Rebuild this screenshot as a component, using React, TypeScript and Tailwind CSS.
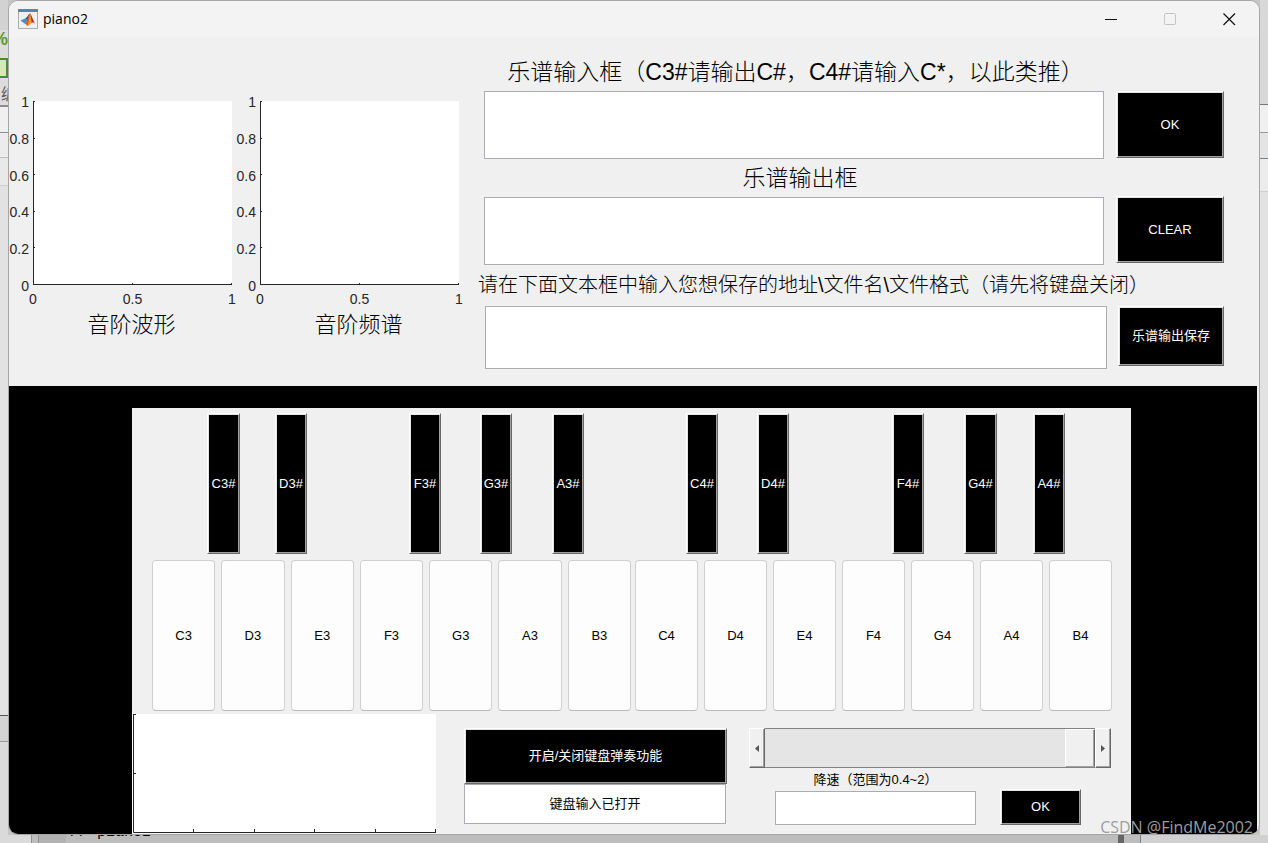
import { useState } from "react";
import type { ReactNode } from "react";

const RAISED =
  "border border-t-white border-l-white border-r-[#696969] border-b-[#696969]";
const BLACK_BUTTON = `${RAISED} bg-black text-white text-[13px] leading-4 shadow-[inset_1px_1px_0_#e3e3e3,inset_-1px_-1px_0_#a0a0a0]`;
const GREY_BUTTON = `${RAISED} bg-[#f0f0f0] shadow-[inset_-1px_-1px_0_#a0a0a0]`;
const FIELD = "block resize-none border border-[#abadb3] bg-white outline-none";

const BLACK_KEYS = [
  { note: "C3#", column: "col-start-2" },
  { note: "D3#", column: "col-start-4" },
  { note: "F3#", column: "col-start-6" },
  { note: "G3#", column: "col-start-8" },
  { note: "A3#", column: "col-start-10" },
  { note: "C4#", column: "col-start-12" },
  { note: "D4#", column: "col-start-14" },
  { note: "F4#", column: "col-start-16" },
  { note: "G4#", column: "col-start-18" },
  { note: "A4#", column: "col-start-20" },
];

const OCTAVES = [
  ["C3", "D3", "E3", "F3", "G3", "A3", "B3"],
  ["C4", "D4", "E4", "F4", "G4", "A4", "B4"],
];

function MatlabIcon() {
  return (
    <svg width="20" height="20" viewBox="0 0 20 20" aria-hidden="true">
      <rect x="0.5" y="0.5" width="19" height="19" fill="#eef0f2" stroke="#a9adb1" />
      <rect x="0" y="0" width="20" height="3" fill="#4f86b4" />
      <path d="M2.500 11.600 7.200 9.400l2.200 1.800-2.600 3.600z" fill="#3a8fd0" />
      <path d="M7.200 9.400C9.200 8.800 10 5.600 12 4.200L9.400 11.200z" fill="#27558c" />
      <path d="M12 4.200C10.500 6 9.500 12 6.800 14.800c1.200-.2 1.800 1.600 2.700 2.100 2-.6 2.600-3.200 4.200-3.200z" fill="#e2571c" />
      <path d="M12 4.200c-.6 3-1.100 8.600-2.500 12.700 2-.6 2.600-3.200 4.200-3.200-.6-3.200-.9-7-1.700-9.500z" fill="#f39a2b" />
      <path d="M12 4.200c1.600 1.200 3 7 5.200 10.600-1.200-.8-2.300-1.400-3.500-1.100-.6-3.200-.9-7-1.700-9.500z" fill="#b5361a" />
    </svg>
  );
}

function Axes({ caption }: { caption: string }) {
  const yTicks = ["1", "0.8", "0.6", "0.4", "0.2", "0"];
  const xTicks = ["0", "0.5", "1"];
  return (
    <figure className="w-[227px] shrink-0">
      <svg
        className="block overflow-visible"
        width="227"
        height="218"
        viewBox="0 0 227 218"
        fontFamily="Liberation Sans, Arial, sans-serif"
        fontSize="14"
        fill="#262626"
        role="img"
        aria-label={caption}
      >
        <rect x="24" y="9" width="199" height="184" fill="#fff" />
        <path d="M24.500 9V192.500H223" fill="none" stroke="#262626" />
        {yTicks.map((label, i) => (
          <g key={label}>
            <path d={`M24 ${9.5 + Math.round(i * 36.6)}h2`} stroke="#262626" />
            <text x="20" y={15 + Math.round(i * 36.8)} textAnchor="end">
              {label}
            </text>
          </g>
        ))}
        {xTicks.map((label, i) => (
          <g key={label}>
            <path d={`M${24.5 + i * 99} 193v-2`} stroke="#262626" />
            <text x={24 + i * 99.5} y="212" textAnchor="middle">
              {label}
            </text>
          </g>
        ))}
      </svg>
      <figcaption className="pl-[18px] text-center text-[22px] leading-[30px] font-light">
        {caption}
      </figcaption>
    </figure>
  );
}

function TitleBar() {
  return (
    <header className="flex h-[37px] items-start bg-[#f3f3f3] pl-[9px]">
      <div className="flex h-9 flex-1 items-center gap-[5px]">
        <MatlabIcon />
        <h1 className="font-['Open_Sans','Noto_Sans',sans-serif] text-[14px] leading-5">
          piano2
        </h1>
      </div>
      <button type="button" aria-label="Minimize" className="flex h-9 w-[59px] items-center justify-center">
        <svg width="13" height="13" viewBox="0 0 13 13" stroke="#111" fill="none">
          <path d="M0 6.500H12" />
        </svg>
      </button>
      <button type="button" aria-label="Maximize" disabled className="flex h-9 w-[59px] items-center justify-center">
        <svg width="13" height="13" viewBox="0 0 13 13" stroke="#c4c4c4" fill="none">
          <rect x="0.5" y="0.5" width="11" height="11" rx="1" />
        </svg>
      </button>
      <button type="button" aria-label="Close" className="flex h-9 w-[59px] items-center justify-center">
        <svg width="13" height="13" viewBox="0 0 13 13" stroke="#111" strokeWidth="1.2" fill="none">
          <path d="M0.500 0.500 12 12M12 0.500 0.500 12" />
        </svg>
      </button>
    </header>
  );
}

function ScoreForm() {
  return (
    <form className="min-w-0 flex-1 pt-[15px] pr-[35px] pb-[17px]" onSubmit={(e) => e.preventDefault()}>
      <div className="flex gap-3 pl-[6px]">
        <div className="flex-1 text-center text-[23px] font-light whitespace-nowrap">
          <label htmlFor="score-in" className="block pl-[3px] leading-[38px]">
            乐谱输入框（C3#请输出C#，C4#请输入C*，以此类推）
          </label>
          <textarea id="score-in" className={`${FIELD} h-[68px] w-full`} />
          <label htmlFor="score-out" className="block pl-3 leading-[38px]">
            乐谱输出框
          </label>
          <textarea id="score-out" readOnly className={`${FIELD} h-[68px] w-full`} />
        </div>
        <div className="flex w-[108px] flex-col gap-[38px] pt-[38px]">
          <button type="button" className={`${BLACK_BUTTON} h-[67px]`}>
            OK
          </button>
          <button type="button" className={`${BLACK_BUTTON} h-[67px]`}>
            CLEAR
          </button>
        </div>
      </div>
      <label htmlFor="save-path" className="block text-[20px] leading-[41px] font-light whitespace-nowrap">
        请在下面文本框中输入您想保存的地址\文件名\文件格式（请先将键盘关闭）
      </label>
      <div className="flex items-start gap-[11px] pl-[7px]">
        <input id="save-path" type="text" className={`${FIELD} h-[63px] min-w-0 flex-1 px-2 text-[20px]`} />
        <button type="button" className={`${BLACK_BUTTON} h-[60px] w-[106px]`}>
          乐谱输出保存
        </button>
      </div>
    </form>
  );
}

function Keys() {
  return (
    <>
      <div className="grid grid-cols-[75fr_33fr_35fr_32fr_102fr_32fr_39fr_32fr_40fr_32fr_102fr_32fr_39fr_32fr_103fr_32fr_40fr_33fr_36fr_32fr_66fr] pt-[5px]">
        {BLACK_KEYS.map(({ note, column }) => (
          <button key={note} type="button" className={`${BLACK_BUTTON} ${column} row-start-1 h-[141px]`}>
            {note}
          </button>
        ))}
      </div>
      <div className="grid grid-cols-[479fr_477fr] gap-1 pt-[6px] pr-[19px] pb-[3px] pl-5">
        {OCTAVES.map((notes) => (
          <div key={notes[0]} className="grid grid-cols-7 gap-[6px]">
            {notes.map((note) => (
              <button
                key={note}
                type="button"
                className="h-[151px] rounded-[4px] border border-[#d0d0d0] border-b-[#bababa] bg-[#fdfdfd] text-[13px]"
              >
                {note}
              </button>
            ))}
          </div>
        ))}
      </div>
    </>
  );
}

function KeyPlot() {
  return (
    <svg className="block shrink-0" width="304" height="119" viewBox="0 0 304 119" stroke="#262626" fill="none" aria-hidden="true">
      <rect width="304" height="119" fill="#fff" stroke="none" />
      <path d="M1.500 0V118.500H304M1 .5h3M1 59.500h3M61.500 118v-3M122.500 118v-3M182.500 118v-3M243.500 118v-3M303.500 118v-3" />
    </svg>
  );
}

function SpeedSlider() {
  const [speed, setSpeed] = useState(2);
  const step = (delta: number) => setSpeed((s) => Math.min(2, Math.max(0.4, s + delta)));
  return (
    <div className="flex h-10">
      <button type="button" aria-label="-" onClick={() => step(-0.1)} className={`${GREY_BUTTON} flex w-4 items-center justify-center`}>
        <svg width="4" height="7" viewBox="0 0 4 7" fill="#555">
          <path d="M4 0v7L0 3.500z" />
        </svg>
      </button>
      <input
        type="range"
        id="speed-slider"
        aria-label="降速"
        min={0.4}
        max={2}
        step={0.01}
        value={speed}
        onChange={(e) => setSpeed(Number(e.target.value))}
        className="m-0 h-10 min-w-0 flex-1 appearance-none border-y border-[#828282] bg-[#e5e5e5] outline-none [&::-webkit-slider-thumb]:h-[38px] [&::-webkit-slider-thumb]:w-[30px] [&::-webkit-slider-thumb]:appearance-none [&::-webkit-slider-thumb]:border [&::-webkit-slider-thumb]:border-t-white [&::-webkit-slider-thumb]:border-r-[#696969] [&::-webkit-slider-thumb]:border-b-[#a0a0a0] [&::-webkit-slider-thumb]:border-l-white [&::-webkit-slider-thumb]:bg-[#f0f0f0] [&::-webkit-slider-thumb]:shadow-[inset_-1px_0_0_#a0a0a0]"
      />
      <button type="button" aria-label="+" onClick={() => step(0.1)} className={`${GREY_BUTTON} flex w-4 items-center justify-center`}>
        <svg width="4" height="7" viewBox="0 0 4 7" fill="#555">
          <path d="M0 0v7l4-3.500z" />
        </svg>
      </button>
    </div>
  );
}

function Controls() {
  return (
    <div className="flex pr-5">
      <KeyPlot />
      <div className="ml-7 flex w-[263px] flex-col pt-[14px] text-[13px]">
        <button type="button" className={`${BLACK_BUTTON} h-[56px]`}>
          开启/关闭键盘弹奏功能
        </button>
        <output className="mr-px h-10 border border-[#abadb3] bg-white text-center leading-[38px]">
          键盘输入已打开
        </output>
      </div>
      <div className="ml-[22px] min-w-0 flex-1 pt-[14px] text-[13px]">
        <SpeedSlider />
        <div className="flex items-end gap-6 pl-[26px]">
          <div className="w-[201px]">
            <label htmlFor="speed" className="block text-center leading-[23px] whitespace-nowrap">
              降速（范围为0.4~2）
            </label>
            <input id="speed" type="text" className={`${FIELD} h-[34px] w-full px-2`} />
          </div>
          <button type="button" className={`${BLACK_BUTTON} h-[36px] w-[81px]`}>
            OK
          </button>
        </div>
      </div>
    </div>
  );
}

function Sliver({ children }: { children?: ReactNode }) {
  return (
    <div aria-hidden="true" className="flex w-2 shrink-0 flex-col overflow-hidden bg-[#dcdcdc]">
      {children}
    </div>
  );
}

export default function App() {
  return (
    <div className="relative flex min-h-screen flex-col bg-[#c6c6c6] font-['Liberation_Sans','Noto_Sans_CJK_SC',sans-serif] text-black">
      <div className="flex flex-1">
        <Sliver>
          <div className="h-[30px] shrink-0 bg-[#d2d2d2]" />
          <div className="flex h-[28px] shrink-0 justify-end text-[18px] leading-[18px] font-bold text-[#5b9a2f]">%</div>
          <div className="h-5 shrink-0 border-2 border-l-0 border-[#4b8b3b] bg-[#d5e8b8]" />
          <div className="h-[27px] shrink-0 pl-px text-[16px] leading-[34px] text-[#555]">编</div>
          <div className="h-[28px] shrink-0 border-t-2 border-b border-[#8c8c8c] bg-[#f0f0f0]" />
          <div className="h-[25px] shrink-0 border-b border-[#bdbdbd] bg-[#ececec]" />
          <div className="h-7 shrink-0 border-b border-[#cfcfcf] bg-[#e9e9e9]" />
          <div className="flex-1 bg-[#e2e2e2]" />
          <div className="h-[27px] shrink-0 border-t border-b border-t-[#555] border-b-[#999] bg-[#d4d4d4]" />
          <div className="h-[93px] shrink-0 bg-[#dadada]" />
        </Sliver>
        <main className="flex min-w-0 flex-1 flex-col overflow-hidden rounded-[10px] border border-[#a6a6a6] bg-[#f0f0f0]">
          <TitleBar />
          <section className="flex">
            <div className="flex pt-[54px]">
              <Axes caption="音阶波形" />
              <Axes caption="音阶频谱" />
            </div>
            <div className="w-[15px] shrink-0" />
            <ScoreForm />
          </section>
          <section className="mr-[2px] flex flex-1 flex-col bg-black pt-[22px] pr-[126px] pl-[123px]">
            <div className="flex-1 bg-[#f0f0f0]">
              <Keys />
              <Controls />
            </div>
          </section>
        </main>
        <Sliver>
          <div className="h-[105px] shrink-0 border-b border-[#777] bg-[#d8d8d8]" />
          <div className="h-[28px] shrink-0 border-b border-[#999] bg-[#f0f0f0]" />
          <div className="h-[26px] shrink-0 border-b border-[#777f88] bg-[#e4e4e4]" />
          <div className="h-[33px] shrink-0 border-b border-[#cfcfcf] bg-[#ececec]" />
          <div className="flex-1 bg-[#e2e2e2]" />
        </Sliver>
      </div>
      <div aria-hidden="true" className="flex h-2 items-end overflow-hidden bg-[#bdbdbd]">
        <div className="h-full w-8 border-r border-[#8f8f8f] bg-[#dadada]" />
        <div className="h-full w-[7px] border-r border-[#8f8f8f]" />
        <div className="h-full w-[27px] bg-[#b2b2b2]" />
        <div className="flex-1 pl-1 font-['Liberation_Mono',monospace] text-[15px] leading-5 whitespace-pre">// piano2</div>
        <div className="h-full w-[6px] bg-[#666]" />
        <div className="h-full w-[17px] border-r border-[#7d838a]" />
        <div className="h-full w-[127px] bg-[#d0d0d0]" />
      </div>
      <div className="absolute right-[15px] bottom-[6px] font-['Open_Sans','Noto_Sans',sans-serif] text-[16px] leading-5 text-[#9d9d9d]">
        CSDN @FindMe2002
      </div>
    </div>
  );
}
